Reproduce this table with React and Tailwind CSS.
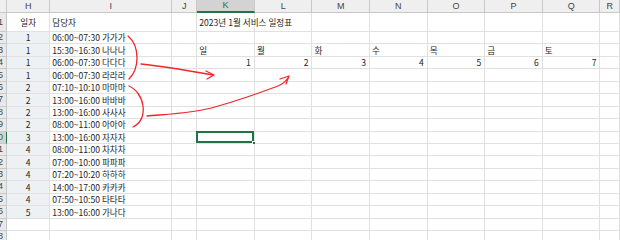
import React from 'react';

const FONT = { fontFamily: '"Noto Sans CJK KR", "Noto Sans", sans-serif' };

const columns = ['', 'H', 'I', 'J', 'K', 'L', 'M', 'N', 'O', 'P', 'Q', 'R'];

const schedule = [
  [1, '06:00~07:30 가가가'],
  [1, '15:30~16:30 나나나'],
  [1, '06:00~07:30 다다다'],
  [1, '06:00~07:30 라라라'],
  [2, '07:10~10:10 마마마'],
  [2, '13:00~16:00 바바바'],
  [2, '13:00~16:00 사사사'],
  [2, '08:00~11:00 아아아'],
  [3, '13:00~16:00 자자자'],
  [4, '08:00~11:00 차차차'],
  [4, '07:00~10:00 파파파'],
  [4, '07:20~10:20 하하하'],
  [4, '14:00~17:00 카카카'],
  [4, '07:50~10:50 타타타'],
  [5, '13:00~16:00 가나다'],
];

const weekdays = ['일', '월', '화', '수', '목', '금', '토'];

// cell contents keyed by "row:col"
const cells = {};
cells['1:1'] = { text: '일자', align: 'center' };
cells['1:2'] = { text: '담당자' };
cells['1:4'] = { text: '2023년 1월 서비스 일정표', spill: true };
schedule.forEach(([day, who], i) => {
  cells[`${i + 2}:1`] = { text: String(day), align: 'center', fill: true };
  cells[`${i + 2}:2`] = { text: who };
});
weekdays.forEach((d, i) => {
  cells[`3:${i + 4}`] = { text: d };
  cells[`4:${i + 4}`] = { text: String(i + 1), align: 'right' };
});

const ROWS = 19;

const Cell = ({ r, c }) => {
  const cell = cells[`${r}:${c}`];
  const selected = r === 10 && c === 4;
  const align =
    cell?.align === 'center' ? 'justify-center' : cell?.align === 'right' ? 'justify-end pr-[3px]' : 'justify-start pl-[2px]';
  return (
    <div
      className={`relative flex items-center border-r border-b border-[#e1e1e1] text-[8.6px] leading-none text-[#262626] ${align} ${
        cell?.fill ? 'bg-[#eef1f3]' : 'bg-white'
      }`}
    >
      {cell && (
        <span className={`whitespace-nowrap ${cell.spill ? 'relative z-10 bg-white pr-[2px]' : ''}`}>{cell.text}</span>
      )}
      {selected && (
        <>
          <div className="absolute -left-px -top-px right-0 bottom-0 border-2 border-[#217346]" />
          <div className="absolute -right-[2px] -bottom-[2px] h-[4px] w-[4px] bg-[#217346] border border-white" />
        </>
      )}
    </div>
  );
};

const App = () => {
  const rows = [];
  for (let r = 1; r <= ROWS; r++) {
    const active = r === 10;
    rows.push(
      <div
        key={`rh${r}`}
        className={`flex items-center justify-end overflow-hidden pr-[3px] border-b border-r text-[9px] leading-none ${
          active
            ? 'bg-[#d3d3d3] text-[#217346] border-r-[#217346] border-b-[#c8c8c8]'
            : 'bg-[#e9e9e9] text-[#444] border-[#c8c8c8]'
        }`}
        style={{ fontFamily: '"Liberation Sans", sans-serif' }}
      >
        <span className="shrink-0">{r}</span>
      </div>
    );
    for (let c = 1; c < columns.length; c++) {
      rows.push(<Cell key={`${r}:${c}`} r={r} c={c} />);
    }
  }

  return (
    <div className="relative h-[240px] w-[620px] overflow-hidden bg-white" style={FONT}>
      <div className="grid grid-cols-[7px_43.3px_121.7px_25.3px_repeat(7,57.6px)_1fr] grid-rows-[13px_19px_repeat(18,12.44px)]">
        {columns.map((col, i) => (
          <div
            key={`ch${i}`}
            className={`flex items-center justify-center border-r text-[9px] leading-none ${
              col === 'K'
                ? 'bg-[#d3d3d3] text-[#217346] border-b-2 border-b-[#217346] border-r-[#c8c8c8]'
                : 'bg-[#efefef] text-[#444] border-b border-[#c8c8c8]'
            }`}
            style={{ fontFamily: '"Liberation Sans", sans-serif' }}
          >
            {col}
          </div>
        ))}
        {rows}
      </div>

      {/* hand-drawn brackets and arrows */}
      <svg
        className="pointer-events-none absolute inset-0"
        width="620"
        height="240"
        viewBox="0 0 620 240"
        fill="none"
        stroke="#f2262c"
        strokeWidth="1.3"
        strokeLinecap="round"
        strokeLinejoin="round"
      >
        <path d="M128 36 C134 41 137 50 137 58 C137 66 135 73 129 79" />
        <path d="M141 64 C160 66 185 70 213 75" />
        <path d="M206 71 L214 75 L207 79" />
        <path d="M129 86 C136 89 142 97 143 106 C144 115 141 123 133 127" />
        <path d="M147 116 C170 114 195 113 215 107 C240 100 262 92 278 86 C283 84 286 81 288 78" />
        <path d="M280 79 L289 76 L286 84" />
      </svg>
    </div>
  );
};

export default App;
